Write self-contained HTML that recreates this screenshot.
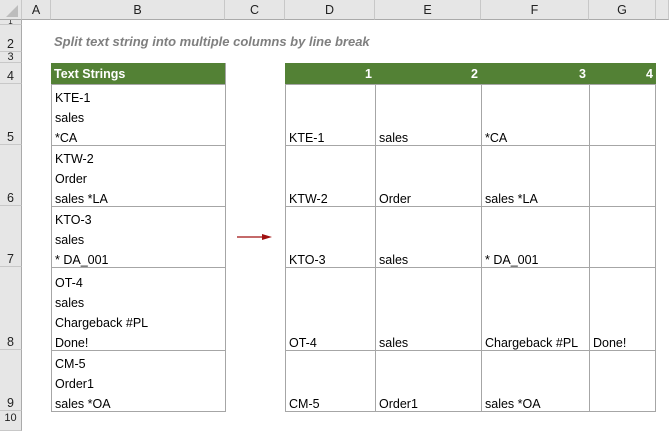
<!DOCTYPE html>
<html><head><meta charset="utf-8"><style>
body{margin:0;width:669px;height:422px;overflow:hidden;background:#fff;font-family:"Liberation Sans",Calibri,sans-serif;position:relative}
div{position:absolute;box-sizing:border-box}
.ch{top:0;height:20px;background:#e6e6e6;border-right:1px solid #c8c8c8;border-bottom:1px solid #aaa;font-size:12.5px;text-align:center;line-height:20px;color:#222}
.rh{left:0;width:22px;background:#e6e6e6;border-bottom:1px solid #c8c8c8;border-right:1px solid #aaa;font-size:12.5px;text-align:center;color:#222;display:flex;align-items:flex-end;justify-content:center;padding-bottom:0;line-height:14px}
.c{border:1px solid #a6a6a6;font-size:12.5px;color:#000;padding-left:3px;line-height:20px;display:flex;flex-direction:column;justify-content:flex-end;padding-bottom:0}
.c span{position:relative;top:3px}
.g{top:63px;height:22px;background:#538135;color:#fff;font-weight:bold;font-size:12.5px;line-height:22px;border-right:1px solid #a6a6a6}
</style></head><body>
<div class="ch" style="left:0;width:22px"><svg width="22" height="20" style="position:absolute;left:0;top:0"><polygon points="18,5 18,17 6,17" fill="#bdbdbd"/></svg></div>
<div class="ch" style="left:22px;width:29px">A</div>
<div class="ch" style="left:51px;width:174px">B</div>
<div class="ch" style="left:225px;width:60px">C</div>
<div class="ch" style="left:285px;width:90px">D</div>
<div class="ch" style="left:375px;width:106px">E</div>
<div class="ch" style="left:481px;width:108px">F</div>
<div class="ch" style="left:589px;width:67px">G</div>
<div class="ch" style="left:656px;width:13px"></div>

<div class="rh" style="top:20px;height:5px;font-size:8px;line-height:5px;overflow:hidden">1</div>
<div class="rh" style="top:25px;height:27px">2</div>
<div class="rh" style="top:52px;height:11px;font-size:11px;line-height:10px;overflow:hidden">3</div>
<div class="rh" style="top:63px;height:21px">4</div>
<div class="rh" style="top:84px;height:61px">5</div>
<div class="rh" style="top:145px;height:61px">6</div>
<div class="rh" style="top:206px;height:61px">7</div>
<div class="rh" style="top:267px;height:83px">8</div>
<div class="rh" style="top:350px;height:61px">9</div>
<div class="rh" style="top:411px;height:20px;align-items:flex-start;font-size:11px">10</div>

<div style="left:54px;top:34px;font-size:13px;font-style:italic;font-weight:bold;color:#7f7f7f;white-space:nowrap">Split text string into multiple columns by line break</div>

<div class="g" style="left:51px;width:175px;padding-left:3px">Text Strings</div>
<div class="g" style="left:285px;width:91px;text-align:right;padding-right:3px">1</div>
<div class="g" style="left:375px;width:107px;text-align:right;padding-right:3px">2</div>
<div class="g" style="left:481px;width:109px;text-align:right;padding-right:3px">3</div>
<div class="g" style="left:589px;width:67px;text-align:right;padding-right:3px;border-right:none">4</div>

<div class="c" style="left:51px;top:84px;width:175px;height:62px"><span>KTE-1</span><span>sales</span><span>*CA</span></div>
<div class="c" style="left:51px;top:145px;width:175px;height:62px"><span>KTW-2</span><span>Order</span><span>sales *LA</span></div>
<div class="c" style="left:51px;top:206px;width:175px;height:62px"><span>KTO-3</span><span>sales</span><span>* DA_001</span></div>
<div class="c" style="left:51px;top:267px;width:175px;height:84px"><span>OT-4</span><span>sales</span><span>Chargeback #PL</span><span>Done!</span></div>
<div class="c" style="left:51px;top:350px;width:175px;height:62px"><span>CM-5</span><span>Order1</span><span>sales *OA</span></div>

<div class="c" style="left:285px;top:84px;width:91px;height:62px"><span>KTE-1</span></div>
<div class="c" style="left:375px;top:84px;width:107px;height:62px"><span>sales</span></div>
<div class="c" style="left:481px;top:84px;width:109px;height:62px"><span>*CA</span></div>
<div class="c" style="left:589px;top:84px;width:67px;height:62px"></div>

<div class="c" style="left:285px;top:145px;width:91px;height:62px"><span>KTW-2</span></div>
<div class="c" style="left:375px;top:145px;width:107px;height:62px"><span>Order</span></div>
<div class="c" style="left:481px;top:145px;width:109px;height:62px"><span>sales *LA</span></div>
<div class="c" style="left:589px;top:145px;width:67px;height:62px"></div>

<div class="c" style="left:285px;top:206px;width:91px;height:62px"><span>KTO-3</span></div>
<div class="c" style="left:375px;top:206px;width:107px;height:62px"><span>sales</span></div>
<div class="c" style="left:481px;top:206px;width:109px;height:62px"><span>* DA_001</span></div>
<div class="c" style="left:589px;top:206px;width:67px;height:62px"></div>

<div class="c" style="left:285px;top:267px;width:91px;height:84px"><span>OT-4</span></div>
<div class="c" style="left:375px;top:267px;width:107px;height:84px"><span>sales</span></div>
<div class="c" style="left:481px;top:267px;width:109px;height:84px"><span>Chargeback #PL</span></div>
<div class="c" style="left:589px;top:267px;width:67px;height:84px"><span>Done!</span></div>

<div class="c" style="left:285px;top:350px;width:91px;height:62px"><span>CM-5</span></div>
<div class="c" style="left:375px;top:350px;width:107px;height:62px"><span>Order1</span></div>
<div class="c" style="left:481px;top:350px;width:109px;height:62px"><span>sales *OA</span></div>
<div class="c" style="left:589px;top:350px;width:67px;height:62px"></div>

<svg style="position:absolute;left:235px;top:232px" width="40" height="10"><line x1="2" y1="5" x2="30" y2="5" stroke="#a01010" stroke-width="1.3"/><polygon points="27,2 37,5 27,8" fill="#a01010"/></svg>
</body></html>
